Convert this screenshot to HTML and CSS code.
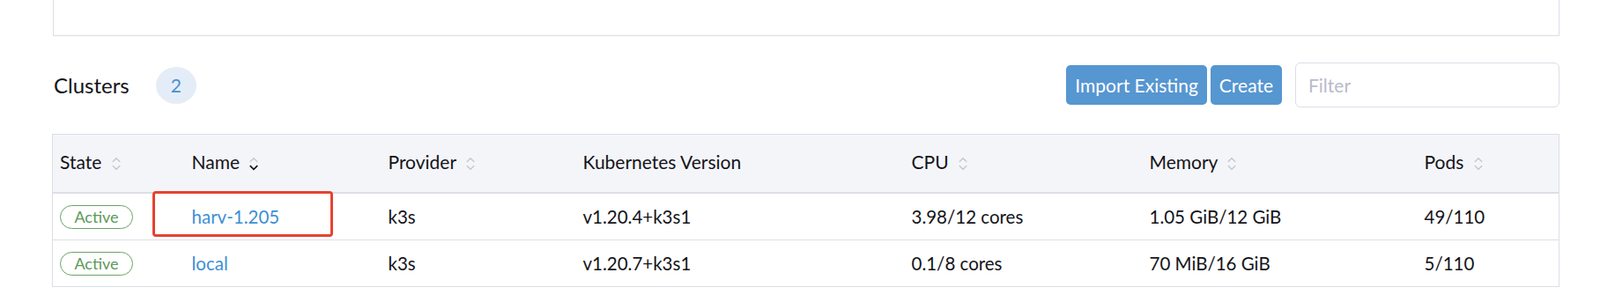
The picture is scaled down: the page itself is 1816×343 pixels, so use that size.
FILE: index.html
```html
<!DOCTYPE html>
<html lang="en">
<head>
    <meta charset="UTF-8">
    <title>Clusters</title>
    <link rel="stylesheet" href="styles.css">
</head>
<body>
    <div class="page">
        <div class="top-card"></div>

        <div class="list-header">
            <div class="title">
                <h2>Clusters</h2>
                <span class="count">2</span>
            </div>
            <div class="actions">
                <button class="btn">Import Existing</button>
                <button class="btn">Create</button>
                <input class="filter" type="text" placeholder="Filter">
            </div>
        </div>

        <table class="clusters">
            <colgroup>
                <col style="width: 150px">
                <col style="width: 223px">
                <col style="width: 221px">
                <col style="width: 373px">
                <col style="width: 270px">
                <col style="width: 312px">
                <col>
            </colgroup>
            <thead>
                <tr>
                    <th>State <svg class="sort" viewBox="0 0 11 17"><path d="M1.5 6.5 L5.5 2.5 L9.5 6.5"/><path d="M1.5 10.5 L5.5 14.5 L9.5 10.5"/></svg></th>
                    <th>Name <svg class="sort" viewBox="0 0 11 17"><path d="M1.5 6.5 L5.5 2.5 L9.5 6.5"/><path class="on" d="M1.5 10.5 L5.5 14.5 L9.5 10.5"/></svg></th>
                    <th>Provider <svg class="sort" viewBox="0 0 11 17"><path d="M1.5 6.5 L5.5 2.5 L9.5 6.5"/><path d="M1.5 10.5 L5.5 14.5 L9.5 10.5"/></svg></th>
                    <th>Kubernetes Version</th>
                    <th>CPU <svg class="sort" viewBox="0 0 11 17"><path d="M1.5 6.5 L5.5 2.5 L9.5 6.5"/><path d="M1.5 10.5 L5.5 14.5 L9.5 10.5"/></svg></th>
                    <th>Memory <svg class="sort" viewBox="0 0 11 17"><path d="M1.5 6.5 L5.5 2.5 L9.5 6.5"/><path d="M1.5 10.5 L5.5 14.5 L9.5 10.5"/></svg></th>
                    <th>Pods <svg class="sort" viewBox="0 0 11 17"><path d="M1.5 6.5 L5.5 2.5 L9.5 6.5"/><path d="M1.5 10.5 L5.5 14.5 L9.5 10.5"/></svg></th>
                </tr>
            </thead>
            <tbody>
                <tr>
                    <td><span class="state">Active</span></td>
                    <td class="name-cell"><a href="#">harv-1.205</a><span class="highlight"></span></td>
                    <td>k3s</td>
                    <td>v1.20.4+k3s1</td>
                    <td>3.98/12 cores</td>
                    <td>1.05 GiB/12 GiB</td>
                    <td>49/110</td>
                </tr>
                <tr>
                    <td><span class="state">Active</span></td>
                    <td><a href="#">local</a></td>
                    <td>k3s</td>
                    <td>v1.20.7+k3s1</td>
                    <td>0.1/8 cores</td>
                    <td>70 MiB/16 GiB</td>
                    <td>5/110</td>
                </tr>
            </tbody>
        </table>
    </div>
</body>
</html>
```

FILE: styles.css
```css
body {
    margin: 0;
    background-color: #fff;
    font-family: Lato, "Open Sans", sans-serif;
    color: #141419;
}

.page {
    padding: 0 46px 0 59px;
}

.top-card {
    height: 40px;
    border: 1px solid #dcdee7;
    border-top: none;
    margin-left: 1px;
}

/* Clusters title + buttons */
.list-header {
    display: flex;
    justify-content: space-between;
    align-items: center;
    margin-top: 30px;
    height: 51px;
}

.title {
    display: flex;
    align-items: center;
    padding-left: 2px;
}

.title h2 {
    margin: 0;
    font-size: 24px;
    font-weight: 400;
}

.count {
    display: flex;
    align-items: center;
    justify-content: center;
    width: 46px;
    height: 42px;
    margin-left: 30px;
    border-radius: 50%;
    background-color: #e4edf7;
    color: #4a8fd0;
    font-size: 21px;
}

.actions {
    display: flex;
    align-items: center;
}

.btn {
    height: 45px;
    padding: 0 10px;
    margin-right: 4px;
    border: none;
    border-radius: 5px;
    background-color: #5696d1;
    color: #fff;
    font-family: inherit;
    font-size: 21px;
}

.btn + .btn {
    margin-right: 15px;
}

.filter {
    box-sizing: border-box;
    width: 300px;
    height: 51px;
    padding: 0 14px;
    border: 1px solid #dcdee7;
    border-radius: 6px;
    font-family: inherit;
    font-size: 21px;
}

.filter::placeholder {
    color: #b9bacb;
}

/* Table */
.clusters {
    width: 100%;
    margin-top: 30px;
    border-collapse: collapse;
    table-layout: fixed;
    border: 1px solid #dcdee7;
    font-size: 20.5px;
}

.clusters th {
    height: 60px;
    padding: 0 0 5px 8px;
    background-color: #f4f5f9;
    border-bottom: 2px solid #dcdee7;
    text-align: left;
    font-size: 21px;
    font-weight: 400;
}

.clusters td {
    height: 52px;
    padding: 0 0 0 8px;
    border-bottom: 1px solid #dcdee7;
}

.sort {
    width: 12px;
    height: 18px;
    margin-left: 5px;
    vertical-align: -3px;
    fill: none;
    stroke: #c3c4cd;
    stroke-width: 1.3;
}

.sort .on {
    stroke: #141419;
    stroke-width: 1.6;
}

.state {
    display: inline-block;
    box-sizing: border-box;
    width: 83px;
    height: 27px;
    line-height: 25px;
    border: 1px solid #66a463;
    border-radius: 14px;
    color: #5b9a58;
    text-align: center;
    font-size: 18px;
}

.clusters a {
    color: #3d8fd4;
    text-decoration: none;
}

.name-cell {
    position: relative;
}

/* red annotation box drawn over the name cell */
.highlight {
    position: absolute;
    left: -37px;
    top: -3px;
    width: 199px;
    height: 46px;
    border: 3px solid #e5432f;
    border-radius: 4px;
}
```
